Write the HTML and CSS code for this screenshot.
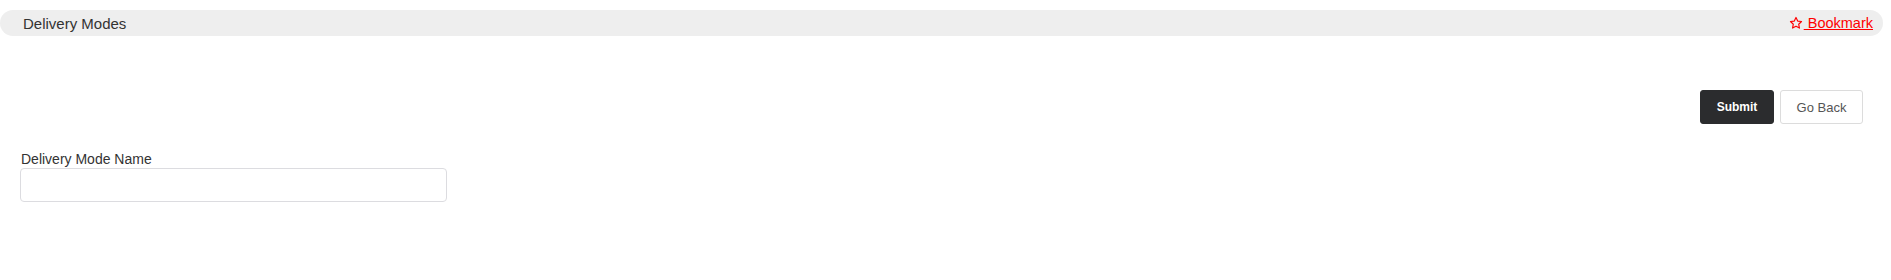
FILE: index.html
```html
<!DOCTYPE html>
<html>
<head>
<meta charset="utf-8">
<link rel="stylesheet" href="styles.css">
</head>
<body>
<div class="topbar">
  <span class="title">Delivery Modes</span>
  <a class="bookmark" href="#"><svg class="star" viewBox="0 0 24 24" width="14" height="14"><path d="M12 2.5l2.9 6.2 6.6.8-4.9 4.6 1.3 6.6L12 17.4l-5.9 3.3 1.3-6.6-4.9-4.6 6.6-.8z" fill="none" stroke="#ff0000" stroke-width="2" stroke-linejoin="round"/></svg> Bookmark</a>
</div>
<div class="actions">
  <button class="btn btn-primary">Submit</button>
  <button class="btn btn-default">Go Back</button>
</div>
<div class="form">
  <label class="label">Delivery Mode Name</label>
  <input class="input" type="text">
</div>
</body>
</html>
```
FILE: styles.css
```css
html, body {
  margin: 0;
  padding: 0;
  background: #fff;
  font-family: "Liberation Sans", Arial, sans-serif;
}
.topbar {
  margin-top: 10px;
  width: 1883px;
  height: 26px;
  background: #eeeeee;
  border-radius: 13px;
  display: flex;
  align-items: center;
  justify-content: space-between;
  box-sizing: border-box;
  padding: 0 10px 0 23px;
}
.title {
  font-size: 15px;
  color: #333;
}
.bookmark {
  font-size: 14.5px;
  color: #ff0000;
  text-decoration: underline;
  display: flex;
  align-items: center;
  white-space: pre;
}
.star {
  display: block;
  margin-right: 1px;
}
.actions {
  display: flex;
  justify-content: flex-end;
  gap: 6px;
  margin-top: 54px;
  padding-right: 28px;
}
.btn {
  height: 34px;
  box-sizing: border-box;
  border-radius: 3px;
  padding: 0;
  white-space: nowrap;
  font-family: "Liberation Sans", Arial, sans-serif;
  cursor: pointer;
}
.btn-primary {
  background: #2b2c2e;
  border: 1px solid #2b2c2e;
  color: #fff;
  font-weight: bold;
  font-size: 12px;
  width: 74px;
}
.btn-default {
  background: #fff;
  border: 1px solid #dcdcdc;
  color: #555;
  font-size: 13px;
  width: 83px;
}
.form {
  display: flex;
  flex-direction: column;
  padding-left: 20px;
  margin-top: 27px;
}
.label {
  font-size: 14px;
  color: #333;
  line-height: 16px;
  margin-left: 1px;
  margin-bottom: 1px;
}
.input {
  width: 427px;
  height: 34px;
  box-sizing: border-box;
  border: 1px solid #dcdce0;
  border-radius: 4px;
  margin: 0;
  padding: 0 8px;
}
```
